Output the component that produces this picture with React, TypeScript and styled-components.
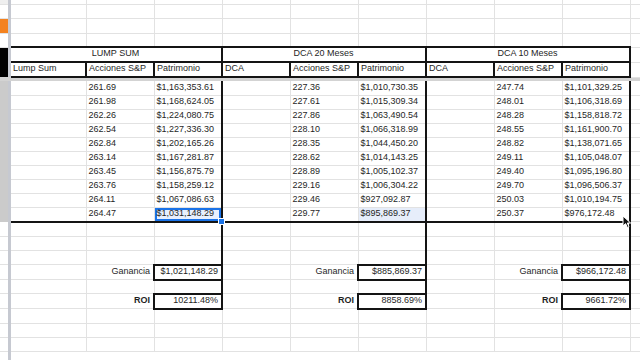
import React from "react";
import styled, { createGlobalStyle } from "styled-components";

const GlobalStyle = createGlobalStyle`
  html, body {
    margin: 0;
    padding: 0;
    background: #ffffff;
  }
`;

const GRID = "1px solid #e2e2e2";
const INK = "2px solid #141414";

const Page = styled.div`
  position: relative;
  width: 640px;
  height: 360px;
  overflow: hidden;
  background: #ffffff;
`;

const Sheet = styled.table`
  border-collapse: collapse;
  table-layout: fixed;
  width: 640px;
  font-family: "Liberation Sans", Arial, sans-serif;
  font-size: 9px;
  color: #1f1f1f;
`;

const Col = styled.col<{ $w: number }>`
  width: ${p => p.$w}px;
`;

const Row = styled.tr<{ $h: number }>`
  height: ${p => p.$h}px;
`;

// the cut-off column at the far left (coloured fills only)
const Edge = styled.td<{ $fill?: string; $lined?: boolean }>`
  padding: 0;
  background: ${p => p.$fill || "#ffffff"};
  border-bottom: ${p => (p.$lined ? GRID : "none")};
`;

// frozen column divider
const FreezeBar = styled.td`
  padding: 0;
  background: #c6c9d1;
  border: none;
`;

const Cell = styled.td<{
  $t?: boolean;
  $b?: boolean;
  $l?: boolean;
  $r?: boolean;
  $align?: "left" | "right" | "center";
  $bold?: boolean;
  $flat?: boolean;
  $bare?: boolean;
  $bg?: string;
  $active?: boolean;
}>`
  position: relative;
  padding: ${p => (p.$flat ? "0" : "0 3px 3px 2px")};
  line-height: 10px;
  vertical-align: bottom;
  white-space: nowrap;
  text-align: ${p => p.$align || "left"};
  font-weight: ${p => (p.$bold ? 700 : 400)};
  background: ${p => p.$bg || "transparent"};
  border-top: ${p => (p.$t ? INK : "none")};
  border-left: ${p => (p.$l ? INK : "none")};
  border-right: ${p => (p.$r ? INK : p.$bare ? "none" : GRID)};
  border-bottom: ${p => (p.$b ? INK : p.$bare ? "none" : GRID)};
  box-shadow: ${p => (p.$active ? "inset 0 0 0 2px #1a73e8" : "none")};
`;

const FreezeCell = styled.td`
  padding: 0;
  background: #d3d3d3;
  border: none;
`;

const Handle = styled.span`
  position: absolute;
  right: -4px;
  bottom: -4px;
  width: 5px;
  height: 5px;
  background: #1a73e8;
  border: 1px solid #ffffff;
  z-index: 2;
`;

const Pointer = styled.svg`
  position: absolute;
  left: 622px;
  top: 215px;
`;

type Section = {
  title: string;
  first: string;
  shares: string[];
  values: string[];
  gain: string;
  roi: string;
};

const sections: Section[] = [
  {
    title: "LUMP SUM",
    first: "Lump Sum",
    shares: ["261.69", "261.98", "262.26", "262.54", "262.84", "263.14", "263.45", "263.76", "264.11", "264.47"],
    values: [
      "$1,163,353.61", "$1,168,624.05", "$1,224,080.75", "$1,227,336.30", "$1,202,165.26",
      "$1,167,281.87", "$1,156,875.79", "$1,158,259.12", "$1,067,086.63", "$1,031,148.29"
    ],
    gain: "$1,021,148.29",
    roi: "10211.48%"
  },
  {
    title: "DCA 20 Meses",
    first: "DCA",
    shares: ["227.36", "227.61", "227.86", "228.10", "228.35", "228.62", "228.89", "229.16", "229.46", "229.77"],
    values: [
      "$1,010,730.35", "$1,015,309.34", "$1,063,490.54", "$1,066,318.99", "$1,044,450.20",
      "$1,014,143.25", "$1,005,102.37", "$1,006,304.22", "$927,092.87", "$895,869.37"
    ],
    gain: "$885,869.37",
    roi: "8858.69%"
  },
  {
    title: "DCA 10 Meses",
    first: "DCA",
    shares: ["247.74", "248.01", "248.28", "248.55", "248.82", "249.11", "249.40", "249.70", "250.03", "250.37"],
    values: [
      "$1,101,329.25", "$1,106,318.69", "$1,158,818.72", "$1,161,900.70", "$1,138,071.65",
      "$1,105,048.07", "$1,095,196.80", "$1,096,506.37", "$1,010,194.75", "$976,172.48"
    ],
    gain: "$966,172.48",
    roi: "9661.72%"
  }
];

const widths = [8, 3, 75, 68, 68, 68, 68, 68, 68, 68, 68, 10];

// empty grid row across all sheet columns
const EmptyCells = ({ flat }: { flat?: boolean }) => (
  <>
    {Array.from({ length: 10 }).map((_, i) => (
      <Cell key={i} $flat={flat} />
    ))}
  </>
);

const topFills = ["#efefef", "#ffffff", "#f4821f", "#ffffff"];
const topHeights = [4, 14, 15, 14];

// rows below the data: [height, kind]
const lowerRows: [number, "blank" | "gain" | "roi" | "tail"][] = [
  [15, "blank"],
  [14, "blank"],
  [14, "blank"],
  [15, "gain"],
  [14, "blank"],
  [15, "roi"],
  [15, "tail"],
  [14, "tail"],
  [14, "tail"]
];

const App = () => {
  return (
    <Page>
      <GlobalStyle />
      <Sheet>
        <colgroup>
          {widths.map((w, i) => (
            <Col key={i} $w={w} />
          ))}
        </colgroup>
        <tbody>
          {topHeights.map((h, r) => (
            <Row key={"top" + r} $h={h}>
              <Edge $fill={topFills[r]} $lined />
              <FreezeBar />
              <EmptyCells flat={h < 10} />
            </Row>
          ))}

          <Row $h={15}>
            <Edge $fill="#000000" />
            <FreezeBar />
            {sections.map(s => (
              <Cell key={s.title} colSpan={3} $t $b $r $align="center">
                {s.title}
              </Cell>
            ))}
            <Cell />
          </Row>

          <Row $h={15}>
            <Edge $fill="#000000" />
            <FreezeBar />
            {sections.map(s => (
              <React.Fragment key={s.title}>
                <Cell $b $r>{s.first}</Cell>
                <Cell $b $r>Acciones S&amp;P</Cell>
                <Cell $b $r>Patrimonio</Cell>
              </React.Fragment>
            ))}
            <Cell />
          </Row>

          <Row $h={4}>
            {widths.map((_, i) => (
              <FreezeCell key={i} />
            ))}
          </Row>

          {sections[0].shares.map((_, r) => {
            const last = r === 9;
            return (
              <Row key={"data" + r} $h={14}>
                <Edge $fill="#cbcbcb" />
                <FreezeBar />
                {sections.map((s, si) => (
                  <React.Fragment key={s.title}>
                    <Cell $b={last} />
                    <Cell $b={last}>{s.shares[r]}</Cell>
                    <Cell
                      $b={last}
                      $r
                      $active={last && si === 0}
                      $bg={last ? (si === 0 ? "#e8f0fe" : si === 1 ? "#e6edfa" : undefined) : undefined}
                    >
                      {s.values[r]}
                      {last && si === 0 && <Handle />}
                    </Cell>
                  </React.Fragment>
                ))}
                <Cell />
              </Row>
            );
          })}

          {lowerRows.map(([h, kind], r) => (
            <Row key={"low" + r} $h={h}>
              <Edge $lined />
              <FreezeBar />
              {sections.map(s => {
                const boxed = kind === "gain" || kind === "roi";
                return (
                  <React.Fragment key={s.title}>
                    <Cell />
                    <Cell $align="right" $bold={kind === "roi"}>
                      {kind === "gain" ? "Ganancia" : kind === "roi" ? "ROI" : ""}
                    </Cell>
                    <Cell $align="right" $r={kind !== "tail"} $t={boxed} $b={boxed} $l={boxed}>
                      {kind === "gain" ? s.gain : kind === "roi" ? s.roi : ""}
                    </Cell>
                  </React.Fragment>
                );
              })}
              <Cell />
            </Row>
          ))}

          <Row $h={9}>
            <Edge />
            <FreezeBar />
            {Array.from({ length: 10 }).map((_, i) => (
              <Cell key={i} $bare $flat />
            ))}
          </Row>
        </tbody>
      </Sheet>

      <Pointer width="10" height="14" viewBox="0 0 10 14">
        <path d="M1 1 L1 11 L3.6 8.6 L5.4 12.6 L7 11.9 L5.3 8 L8.6 8 Z" fill="#111" stroke="#fff" strokeWidth="1" />
      </Pointer>
    </Page>
  );
};

export default App;
